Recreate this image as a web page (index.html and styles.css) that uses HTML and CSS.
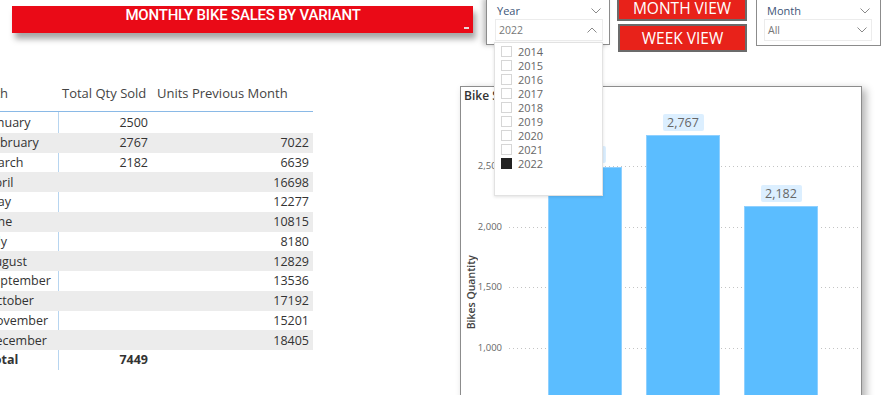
FILE: index.html
```html
<!DOCTYPE html>
<html lang="en">
<head>
    <meta charset="UTF-8">
    <title>Monthly Bike Sales By Variant</title>
    <link rel="stylesheet" href="styles.css">
</head>
<body>
    <div class="report">
        <div class="title-bar">
            <span class="title-text">MONTHLY BIKE SALES BY VARIANT</span>
            <span class="title-dash"></span>
        </div>

        <div class="slicer year-slicer">
            <div class="slicer-head">
                <span>Year</span>
                <svg class="chev" width="10" height="6" viewBox="0 0 10 6"><polyline points="0.5,0.5 5,5 9.5,0.5" /></svg>
            </div>
            <div class="slicer-box">
                <span>2022</span>
                <svg class="chev" width="10" height="6" viewBox="0 0 10 6"><polyline points="0.5,5.5 5,1 9.5,5.5" /></svg>
            </div>
        </div>

        <div class="view-buttons">
            <button class="view-btn month-btn">MONTH VIEW</button>
            <button class="view-btn week-btn">WEEK VIEW</button>
        </div>

        <div class="slicer month-slicer">
            <div class="slicer-head">
                <span>Month</span>
                <svg class="chev" width="10" height="6" viewBox="0 0 10 6"><polyline points="0.5,0.5 5,5 9.5,0.5" /></svg>
            </div>
            <div class="slicer-box">
                <span>All</span>
                <svg class="chev" width="10" height="6" viewBox="0 0 10 6"><polyline points="0.5,0.5 5,5 9.5,0.5" /></svg>
            </div>
        </div>

        <div class="matrix">
            <div class="m-row m-head">
                <div class="c1">Month</div>
                <div class="c2">Total Qty Sold</div>
                <div class="c3">Units Previous Month</div>
            </div>
            <div class="m-body">
                <div class="m-row"><div class="c1">January</div><div class="c2">2500</div><div class="c3"></div></div>
                <div class="m-row alt"><div class="c1">February</div><div class="c2">2767</div><div class="c3">7022</div></div>
                <div class="m-row"><div class="c1">March</div><div class="c2">2182</div><div class="c3">6639</div></div>
                <div class="m-row alt"><div class="c1">April</div><div class="c2"></div><div class="c3">16698</div></div>
                <div class="m-row"><div class="c1">May</div><div class="c2"></div><div class="c3">12277</div></div>
                <div class="m-row alt"><div class="c1">June</div><div class="c2"></div><div class="c3">10815</div></div>
                <div class="m-row"><div class="c1">July</div><div class="c2"></div><div class="c3">8180</div></div>
                <div class="m-row alt"><div class="c1">August</div><div class="c2"></div><div class="c3">12829</div></div>
                <div class="m-row"><div class="c1">September</div><div class="c2"></div><div class="c3">13536</div></div>
                <div class="m-row alt"><div class="c1">October</div><div class="c2"></div><div class="c3">17192</div></div>
                <div class="m-row"><div class="c1">November</div><div class="c2"></div><div class="c3">15201</div></div>
                <div class="m-row alt"><div class="c1">December</div><div class="c2"></div><div class="c3">18405</div></div>
                <div class="m-row total"><div class="c1">Total</div><div class="c2">7449</div><div class="c3"></div></div>
            </div>
        </div>

        <div class="chart">
            <div class="chart-title">Bike Sales by Month</div>
            <div class="axis-title">Bikes Quantity</div>
            <div class="plot">
                <div class="grid" style="bottom: 302.5px"><span>2,500</span></div>
                <div class="grid" style="bottom: 242px"><span>2,000</span></div>
                <div class="grid" style="bottom: 181.5px"><span>1,500</span></div>
                <div class="grid" style="bottom: 121px"><span>1,000</span></div>
                <div class="grid" style="bottom: 60.5px"><span>500</span></div>
                <div class="bars">
                    <div class="bar-col">
                        <div class="bar-label">2,500</div>
                        <div class="bar" style="height: 302.5px"></div>
                    </div>
                    <div class="bar-col">
                        <div class="bar-label">2,767</div>
                        <div class="bar" style="height: 334.8px"></div>
                    </div>
                    <div class="bar-col">
                        <div class="bar-label">2,182</div>
                        <div class="bar" style="height: 264px"></div>
                    </div>
                </div>
            </div>
        </div>

        <div class="year-list">
            <div class="yl-item"><span class="box"></span>2014</div>
            <div class="yl-item"><span class="box"></span>2015</div>
            <div class="yl-item"><span class="box"></span>2016</div>
            <div class="yl-item"><span class="box"></span>2017</div>
            <div class="yl-item"><span class="box"></span>2018</div>
            <div class="yl-item"><span class="box"></span>2019</div>
            <div class="yl-item"><span class="box"></span>2020</div>
            <div class="yl-item"><span class="box"></span>2021</div>
            <div class="yl-item"><span class="box checked"></span>2022</div>
        </div>
    </div>
</body>
</html>
```

FILE: styles.css
```css
body {
    margin: 0;
    padding: 0;
    background: #ffffff;
    font-family: "Open Sans", "Noto Sans", sans-serif;
    overflow: hidden;
}
.report {
    position: relative;
    width: 886px;
    height: 395px;
    overflow: hidden;
}

/* title banner */
.title-bar {
    position: absolute;
    left: 12px;
    top: 6px;
    width: 461px;
    height: 27px;
    background-color: #ea0a17;
    box-shadow: 3px 6px 6px rgba(0, 0, 0, 0.35);
    display: flex;
    justify-content: center;
}
.title-text {
    color: #ffffff;
    font-family: Roboto, sans-serif;
    font-weight: 500;
    font-size: 15px;
    letter-spacing: -0.2px;
    line-height: 19px;
    padding-left: 1px;
}
.title-dash {
    position: absolute;
    right: 4px;
    bottom: 4px;
    width: 5px;
    height: 2px;
    background: #e8d8d8;
}

/* slicers */
.slicer {
    position: absolute;
    top: -2px;
    border: 1px solid #8c8c8c;
    background: #ffffff;
    box-sizing: border-box;
}
.year-slicer {
    left: 486px;
    width: 124px;
    height: 47px;
    box-shadow: -3px 0 5px rgba(0, 0, 0, 0.25);
}
.month-slicer {
    left: 756px;
    width: 125px;
    height: 48px;
}
.slicer-head {
    display: flex;
    justify-content: space-between;
    align-items: center;
    height: 20px;
    padding: 3px 8px 0 10px;
    box-sizing: border-box;
    color: #3d5577;
    font-size: 11px;
}
.slicer-box {
    display: flex;
    justify-content: space-between;
    align-items: center;
    margin-left: 8px;
    margin-right: 6px;
    height: 20px;
    border: 1px solid #ececec;
    padding: 0 5px 0 3px;
    color: #777;
    font-size: 10.5px;
}
.month-slicer .slicer-head { padding-left: 10px; padding-right: 10px; }
.month-slicer .slicer-box { margin-left: 7px; margin-right: 8px; padding-right: 4px; }
.chev polyline {
    fill: none;
    stroke: #8a8a8a;
    stroke-width: 1;
}

/* view buttons */
.view-buttons {
    position: absolute;
    left: 617px;
    top: -8px;
    display: flex;
    flex-direction: column;
    gap: 3px;
}
.view-btn {
    background-color: #e8221a;
    color: #ffffff;
    border: 2px solid #6b6b6b;
    font-family: "Open Sans", sans-serif;
    font-size: 15.5px;
    padding: 0;
    width: 130px;
    height: 29px;
    line-height: 25px;
}
.month-btn { padding-top: 2px; }
.week-btn {
    margin-left: 1px;
    width: 129px;
    height: 28px;
}

/* matrix table */
.matrix {
    position: absolute;
    left: -12px;
    top: 85px;
    width: 325px;
    color: #333;
}
.m-row {
    display: grid;
    grid-template-columns: 70px 94px 161px;
    height: 19.75px;
    align-items: center;
    font-size: 12.5px;
}
.m-row.alt { background-color: #ececec; }
.m-row.m-head {
    height: 27px;
    align-items: start;
    font-size: 13px;
    line-height: 16px;
    color: #444;
    border-bottom: 1px solid #8ab9e6;
    box-sizing: border-box;
}
.m-row.m-head .c1 { text-indent: -20px; }
.m-row.m-head .c2 { text-align: left; padding-left: 4px; padding-right: 0; }
.m-row.m-head .c3 { text-align: left; padding-left: 5px; padding-right: 0; white-space: nowrap; }
.m-body {
    padding-top: 1px;
    background-image: linear-gradient(#b7d5f0, #b7d5f0);
    background-size: 1px 100%;
    background-position: 69.5px 0;
    background-repeat: no-repeat;
}
.m-row .c2 { text-align: right; padding-right: 4px; }
.m-row .c3 { text-align: right; padding-right: 4px; }
.m-row.total { font-weight: bold; }
.c1 { white-space: nowrap; text-indent: -1.5px; }

/* chart */
.chart {
    position: absolute;
    left: 460px;
    top: 86px;
    width: 402px;
    height: 340px;
    border: 1px solid #8c8c8c;
    box-sizing: border-box;
    box-shadow: 4px 3px 8px rgba(0, 0, 0, 0.3);
    background: #ffffff;
}
.chart-title {
    position: absolute;
    left: 3px;
    top: 0;
    font-size: 12px;
    font-weight: 600;
    color: #333;
    white-space: nowrap;
}
.axis-title {
    position: absolute;
    left: 3px;
    top: 168px;
    writing-mode: vertical-rl;
    transform: rotate(180deg);
    font-size: 10.5px;
    color: #444;
    font-weight: 600;
}
.plot {
    position: absolute;
    left: 48px;
    top: 14px;
    width: 350px;
    height: 368.5px;
}
.grid {
    position: absolute;
    left: 0;
    right: 0;
    height: 1px;
    background-image: linear-gradient(to right, #c4c4c4 1px, transparent 1px);
    background-size: 4px 1px;
}
.grid span {
    position: absolute;
    right: 100%;
    margin-right: 7px;
    top: -7px;
    font-size: 9.5px;
    color: #666;
}
.bars {
    position: absolute;
    left: 39px;
    bottom: 0;
    display: flex;
    align-items: flex-end;
    gap: 24px;
}
.bar-col {
    width: 74px;
    display: flex;
    flex-direction: column;
    align-items: center;
    gap: 4px;
}
.bar-label {
    width: 41px;
    height: 17px;
    background-color: #dcefff;
    border-radius: 2px;
    color: #666;
    font-size: 12.5px;
    line-height: 17px;
    text-align: center;
}
.bar {
    width: 74px;
    background-color: #5bbdff;
    box-shadow: inset 0 0 0 1px #8fd0ff;
}

/* year dropdown list */
.year-list {
    position: absolute;
    left: 494px;
    top: 42px;
    width: 109px;
    height: 154px;
    box-sizing: border-box;
    background: #ffffff;
    border: 1px solid #e2e2e2;
    box-shadow: 0 1px 3px rgba(0, 0, 0, 0.12);
    padding-top: 1px;
    z-index: 5;
}
.yl-item {
    display: flex;
    align-items: center;
    height: 14px;
    font-size: 11px;
    color: #666;
    padding-left: 6px;
}
.box {
    width: 9px;
    height: 9px;
    border: 1px solid #d6d6d6;
    margin-right: 6px;
}
.box.checked {
    background: #222;
    border-color: #222;
}
```
